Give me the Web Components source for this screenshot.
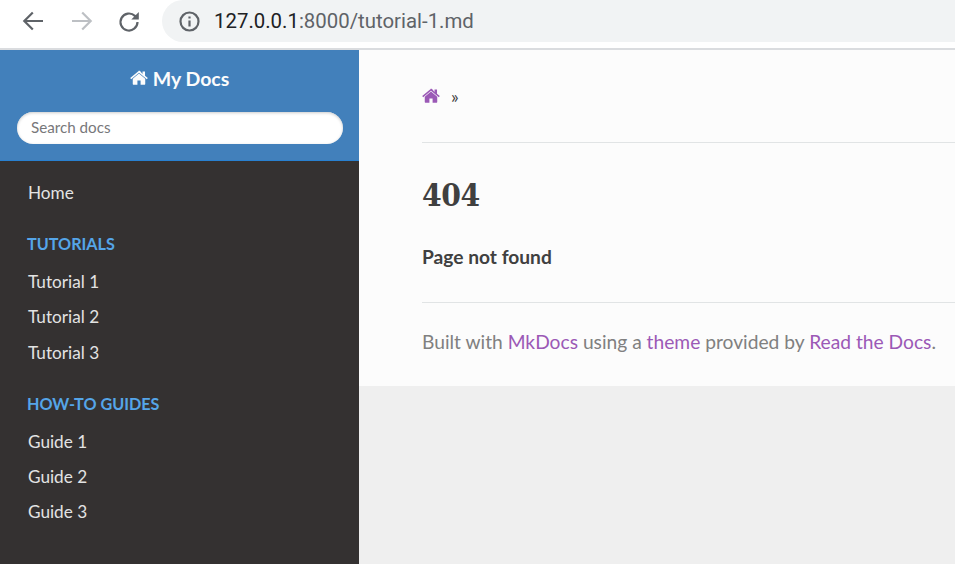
<!DOCTYPE html>
<html lang="en">
<head>
<meta charset="utf-8">
<title>404 - My Docs</title>
<style>
  html, body { margin: 0; height: 100%; overflow: hidden; }
  body { display: flex; flex-direction: column; height: 564px; background: #efefef; font-family: Lato, "Liberation Sans", sans-serif; }
  .page { display: flex; flex: 1; min-height: 0; }
</style>
</head>
<body>
<browser-bar url-host="127.0.0.1" url-path=":8000/tutorial-1.md"></browser-bar>
<div class="page">
  <docs-sidebar>
    <nav-link>Home</nav-link>
    <nav-caption>TUTORIALS</nav-caption>
    <nav-link>Tutorial 1</nav-link>
    <nav-link>Tutorial 2</nav-link>
    <nav-link>Tutorial 3</nav-link>
    <nav-caption>HOW-TO GUIDES</nav-caption>
    <nav-link>Guide 1</nav-link>
    <nav-link>Guide 2</nav-link>
    <nav-link>Guide 3</nav-link>
  </docs-sidebar>
  <docs-content></docs-content>
</div>
<script>
const HOME_ICON = `<svg viewBox="0 0 26 22" aria-hidden="true"><path fill="currentColor" d="M13 4.500 4 12v7.800c0 .5.4.9.8.9h5.900v-6.200h4.600v6.200h5.900c.4 0 .8-.4.8-.9V12z"/><path fill="currentColor" d="M13 .4 .3 11l1.400 1.700L13 3.300l11.300 9.400 1.400-1.700-4-3.300V1.600h-3.600v3.600L14.500.9c-.9-.7-2.100-.7-3 0z"/></svg>`;

class BrowserBar extends HTMLElement {
  connectedCallback() {
    const host = this.getAttribute('url-host');
    const path = this.getAttribute('url-path');
    this.attachShadow({ mode: 'open' }).innerHTML = `
      <style>
        :host { display: flex; align-items: center; height: 42px; padding-bottom: 6px; flex: none; background: #fff; border-bottom: 2px solid #dadcdf; }
        svg { display: block; flex: none; fill: none; stroke-width: 2.200; }
        .back { margin-left: 22px; width: 24px; height: 24px; stroke: #5f6368; }
        .fwd { margin-left: 24px; width: 24px; height: 24px; stroke: #bdc0c4; }
        .reload { margin-left: 23px; width: 24px; height: 24px; stroke: #5f6368; }
        .omni { display: flex; align-items: center; flex: 1; height: 42px; margin-left: 21px; padding-left: 17px; background: #f1f3f4; border-radius: 21px 0 0 21px; }
        .info { width: 21px; height: 21px; stroke: #5f6368; }
        .url { margin-left: 14px; font: 20.400px Roboto, "Open Sans", sans-serif; color: #5f6368; white-space: nowrap; }
        .url b { font-weight: 400; color: #202124; }
      </style>
      <svg class="back" viewBox="0 0 24 24"><path d="M21 12H2.500M10.800 3.500 2.300 12l8.500 8.500"/></svg>
      <svg class="fwd" viewBox="0 0 24 24"><path d="M2 12h18.500M12.200 3.500l8.500 8.500-8.500 8.500"/></svg>
      <svg class="reload" viewBox="0 0 24 24"><path d="M20.500 13a8.500 8.500 0 1 1-2.600-6.100L20 9"/><path d="M21.800 3v7.500h-7.500z" fill="#5f6368" stroke="none"/></svg>
      <div class="omni">
        <svg class="info" viewBox="0 0 21 21"><circle cx="10.500" cy="10.500" r="9"/><path d="M10.500 9.500v6M10.500 5.500v2"/></svg>
        <span class="url"><b>${host}</b>${path}</span>
      </div>`;
  }
}

class DocsSidebar extends HTMLElement {
  constructor() {
    super();
    this.attachShadow({ mode: 'open' }).innerHTML = `
      <style>
        :host { display: flex; flex-direction: column; width: 359px; flex: none; background: #343131; }
        header { display: flex; flex-direction: column; align-items: center; height: 111px; box-sizing: border-box; padding-top: 15px; background: #4280bb; border-bottom: 1px solid #2980d0; }
        .brand { display: flex; align-items: center; gap: 5px; height: 26px; font-size: 19.500px; font-weight: 700; color: #fcfcfc; }
        .brand svg { width: 18px; height: 16px; margin-top: -1px; }
        .search { box-sizing: border-box; width: 326px; height: 32px; margin-top: 21px; padding-left: 14.500px; line-height: 30px; font-size: 15.200px; color: #77777a; background: #fff; border-radius: 16px; box-shadow: inset 0 1px 3px #ccc; }
        nav { display: flex; flex-direction: column; padding-top: 14px; }
      </style>
      <header>
        <div class="brand">${HOME_ICON}<span>My Docs</span></div>
        <div class="search">Search docs</div>
      </header>
      <nav><slot></slot></nav>`;
  }
}

class NavLink extends HTMLElement {
  constructor() {
    super();
    this.attachShadow({ mode: 'open' }).innerHTML = `
      <style>
        :host { display: block; height: 35.400px; line-height: 35.400px; padding-left: 28px; font-size: 17.200px; color: #e3e3e3; }
      </style>
      <slot></slot>`;
  }
}

class NavCaption extends HTMLElement {
  constructor() {
    super();
    this.attachShadow({ mode: 'open' }).innerHTML = `
      <style>
        :host { display: block; height: 24px; line-height: 24px; margin: 21.500px 0 8px; padding-left: 27px; font-size: 16.200px; font-weight: 700; color: #55a5e8; }
      </style>
      <slot></slot>`;
  }
}

class DocsContent extends HTMLElement {
  constructor() {
    super();
    this.attachShadow({ mode: 'open' }).innerHTML = `
      <style>
        :host { display: block; flex: 1; min-width: 0; }
        .panel { height: 336px; box-sizing: border-box; padding-left: 63px; background: #fcfcfc; overflow: hidden; }
        .crumbs { display: flex; align-items: center; height: 92px; border-bottom: 1px solid #e1e4e5; font-size: 18px; color: #404040; }
        .crumbs svg { width: 18px; height: 16px; color: #9b59b6; margin: 0 11px 0 0; }
        h1 { margin: 31px 0 0; font: 700 31.500px/42px "DejaVu Serif Condensed", "DejaVu Serif", "Liberation Serif", serif; letter-spacing: -.5px; color: #404040; }
        .msg { margin: 27px 0 0; font-size: 19.200px; line-height: 28px; font-weight: 700; color: #404040; }
        hr { margin: 31px 0 0; border: 0; border-top: 1px solid #e1e4e5; }
        footer { margin-top: 25px; font-size: 19.220px; line-height: 28px; color: #808080; white-space: nowrap; }
        a { color: #9b59b6; text-decoration: none; }
      </style>
      <div class="panel">
        <div class="crumbs">${HOME_ICON}<span>»</span></div>
        <h1>404</h1>
        <p class="msg">Page not found</p>
        <hr>
        <footer>Built with <a href="#">MkDocs</a> using a <a href="#">theme</a> provided by <a href="#">Read the Docs</a>.</footer>
      </div>`;
  }
}

customElements.define('browser-bar', BrowserBar);
customElements.define('docs-sidebar', DocsSidebar);
customElements.define('nav-link', NavLink);
customElements.define('nav-caption', NavCaption);
customElements.define('docs-content', DocsContent);
</script>
</body>
</html>
